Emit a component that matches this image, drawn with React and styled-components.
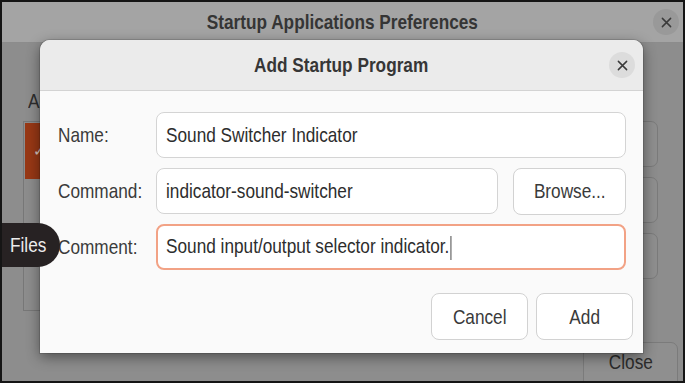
import styled, { createGlobalStyle } from 'styled-components';

const GlobalStyle = createGlobalStyle`
  html, body {
    margin: 0;
    padding: 0;
    background: #fff;
  }
  body {
    font-family: "Liberation Sans", Arial, sans-serif;
    -webkit-font-smoothing: antialiased;
  }
`;

// the reference font is a condensed humanist face; squeeze the text to match it
const Txt = styled.span`
  display: inline-block;
  white-space: nowrap;
  transform: scaleX(${(p) => p.sx || 0.82});
  transform-origin: ${(p) => (p.center ? 'center' : 'left')} center;
`;

const Frame = styled.div`
  position: relative;
  width: 685px;
  height: 383px;
  box-sizing: border-box;
  border: 2px solid #151515;
  overflow: hidden;
  background: #8d8d8d;
  display: flex;
  flex-direction: column;
`;

const TitleBar = styled.div`
  flex: none;
  height: 40px;
  background: #a4a4a4;
  border-bottom: 1px solid #8c8c8c;
  display: grid;
  grid-template-columns: 1fr auto 1fr;
  align-items: center;
  font-weight: bold;
  font-size: 21px;
  color: #353535;
`;

const TitleText = styled.div`
  grid-column: 2;
  display: flex;
  justify-content: center;
`;

const CircleClose = styled.div`
  justify-self: end;
  width: ${(p) => p.size}px;
  height: ${(p) => p.size}px;
  margin-right: ${(p) => p.gap}px;
  border-radius: 50%;
  background: ${(p) => p.bg};
  display: flex;
  align-items: center;
  justify-content: center;
`;

const BgBody = styled.div`
  flex: 1;
  display: flex;
  flex-direction: column;
  padding: 0 25px 0 21px;
`;

const BgHeading = styled.div`
  margin-top: 46px;
  padding-left: 5px;
  font-size: 21px;
  color: #2e2e2e;
`;

const BgMain = styled.div`
  margin-top: 8px;
  height: 190px;
  display: flex;
  gap: 10px;
`;

const BgList = styled.div`
  flex: 1;
  border: 1px solid #777;
  border-right-color: #888;
  padding: 1px;
`;

const BgRow = styled.div`
  height: 56px;
  background: ${(p) => (p.selected ? '#983815' : 'transparent')};
  display: flex;
  align-items: center;
  padding-left: 8px;
  color: #d8c8c0;
  font-size: 15px;
`;

const BgButtonCol = styled.div`
  width: 70px;
  display: flex;
  flex-direction: column;
  gap: 10px;
`;

const BgButton = styled.div`
  height: 46px;
  box-sizing: border-box;
  border: 1px solid #7b7b7b;
  border-radius: 7px;
  background: #8f8f8f;
`;

const BgFooter = styled.div`
  margin-top: 31px;
  margin-right: -20px;
  display: flex;
  justify-content: flex-end;
`;

const BgCloseButton = styled.div`
  width: 95px;
  height: 50px;
  box-sizing: border-box;
  border: 1px solid #7b7b7b;
  border-radius: 7px;
  background: #8f8f8f;
  display: flex;
  justify-content: center;
  padding-top: 7px;
  font-size: 21px;
  color: #2c2c2c;
`;

const Dialog = styled.div`
  position: absolute;
  left: 38px;
  top: 38px;
  width: 603px;
  height: 313px;
  border-radius: 10px 10px 0 0;
  overflow: hidden;
  background: #fafafa;
  box-shadow: 0 4px 14px rgba(0, 0, 0, 0.45), 0 0 0 1px rgba(0, 0, 0, 0.12);
  display: flex;
  flex-direction: column;
`;

const DialogHeader = styled.div`
  flex: none;
  height: 50px;
  background: #ebebeb;
  border-bottom: 1px solid #d3d3d3;
  display: grid;
  grid-template-columns: 1fr auto 1fr;
  align-items: center;
  font-weight: bold;
  font-size: 21px;
  color: #363636;
`;

const DialogBody = styled.div`
  flex: 1;
  padding: 21px 17px 0 18px;
  display: flex;
  flex-direction: column;
`;

const Form = styled.div`
  display: grid;
  grid-template-columns: 83px 1fr 113px;
  grid-auto-rows: 46px;
  row-gap: 10px;
  column-gap: 15px;
  align-items: center;
`;

const Label = styled.div`
  font-size: 21px;
  color: #3b3b3b;
`;

const Field = styled.div`
  grid-column: ${(p) => (p.wide ? '2 / 4' : '2')};
  height: 46px;
  box-sizing: border-box;
  border: ${(p) => (p.focused ? '2px solid #f2a285' : '1px solid #d4d4d4')};
  border-radius: 8px;
  background: #fff;
  display: flex;
  align-items: center;
  padding-left: ${(p) => (p.focused ? 8 : 9)}px;
  font-size: 21px;
  color: #2d2d2d;
  overflow: hidden;
`;

const Caret = styled.span`
  display: inline-block;
  width: 1.5px;
  height: 24px;
  margin-left: 1px;
  vertical-align: middle;
  background: #222;
`;

const Button = styled.div`
  width: ${(p) => p.w || 113}px;
  height: 47px;
  box-sizing: border-box;
  border: 1px solid #d2d2d2;
  border-radius: 8px;
  background: #fff;
  display: flex;
  align-items: center;
  justify-content: center;
  font-size: 21px;
  color: #3a3a3a;
`;

const Actions = styled.div`
  margin-top: 23px;
  margin-right: -7px;
  display: flex;
  justify-content: flex-end;
  gap: 8px;
`;

const Tooltip = styled.div`
  position: absolute;
  left: -2px;
  top: 221px;
  width: 60px;
  height: 44px;
  box-sizing: border-box;
  padding-left: 10px;
  border-radius: 0 22px 22px 0;
  background: #272223;
  color: #ececec;
  font-size: 21px;
  display: flex;
  align-items: center;
`;

const XIcon = ({ size = 11 }) => (
  <svg width={size} height={size} viewBox="0 0 12 12">
    <path d="M1.5 1.5 L10.5 10.5 M10.5 1.5 L1.5 10.5" stroke="#3a3a3a" strokeWidth="1.6" strokeLinecap="round" />
  </svg>
);

export default function App() {
  return (
    <>
      <GlobalStyle />
      <Frame>
        <TitleBar>
          <TitleText>
            <Txt center>Startup Applications Preferences</Txt>
          </TitleText>
          <CircleClose size={26} gap={4} bg="#999">
            <XIcon />
          </CircleClose>
        </TitleBar>
        <BgBody>
          <BgHeading>
            <Txt>Additional startup programs:</Txt>
          </BgHeading>
          <BgMain>
            <BgList>
              <BgRow selected>✓</BgRow>
            </BgList>
            <BgButtonCol>
              <BgButton />
              <BgButton />
              <BgButton />
            </BgButtonCol>
          </BgMain>
          <BgFooter>
            <BgCloseButton>
              <Txt center>Close</Txt>
            </BgCloseButton>
          </BgFooter>
        </BgBody>

        <Dialog>
          <DialogHeader>
            <TitleText>
              <Txt center>Add Startup Program</Txt>
            </TitleText>
            <CircleClose size={26} gap={8} bg="#dcdcdc">
              <XIcon />
            </CircleClose>
          </DialogHeader>
          <DialogBody>
            <Form>
              <Label>
                <Txt>Name:</Txt>
              </Label>
              <Field wide>
                <Txt>Sound Switcher Indicator</Txt>
              </Field>
              <Label>
                <Txt>Command:</Txt>
              </Label>
              <Field>
                <Txt>indicator-sound-switcher</Txt>
              </Field>
              <Button>
                <Txt center>Browse...</Txt>
              </Button>
              <Label>
                <Txt>Comment:</Txt>
              </Label>
              <Field wide focused>
                <Txt>
                  Sound input/output selector indicator.<Caret />
                </Txt>
              </Field>
            </Form>
            <Actions>
              <Button w={97}>
                <Txt center>Cancel</Txt>
              </Button>
              <Button w={97}>
                <Txt center>Add</Txt>
              </Button>
            </Actions>
          </DialogBody>
        </Dialog>

        <Tooltip>
          <Txt>Files</Txt>
        </Tooltip>
      </Frame>
    </>
  );
}
